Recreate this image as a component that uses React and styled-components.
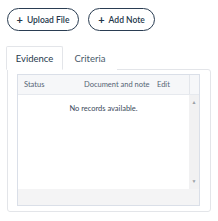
import React from "react";
import styled, { createGlobalStyle } from "styled-components";

const Global = createGlobalStyle`
  html, body { margin: 0; padding: 0; background: #fff; }
  body { font-family: "Lato", "Open Sans", sans-serif; color: #2b3a4a; }
`;

const Page = styled.div`
  width: 218px;
  padding: 8px 8px 0 6px;
  box-sizing: border-box;
`;

const Toolbar = styled.div`
  display: flex;
  gap: 9px;
  padding-left: 1px;
`;

const PillButton = styled.button`
  height: 23px;
  width: ${(p) => p.$w}px;
  padding: 0;
  border: 1px solid #2a3d52;
  border-radius: 12px;
  background: #fff;
  display: flex;
  align-items: center;
  justify-content: center;
  gap: 4px;
  font-family: "Lato", sans-serif;
  font-size: 8.5px;
  font-weight: 600;
  color: #24374a;
  box-sizing: border-box;
`;

const Plus = styled.span`
  font-size: 11px;
  font-weight: 700;
  line-height: 1;
  margin-top: -1px;
`;

const Tabs = styled.div`
  display: flex;
  margin-top: 15px;
  position: relative;
  z-index: 1;
`;

const Tab = styled.div`
  height: 24px;
  width: ${(p) => p.$w}px;
  box-sizing: border-box;
  display: flex;
  align-items: center;
  justify-content: center;
  font-size: 9.5px;
  color: ${(p) => (p.$active ? "#26394c" : "#4a5b6b")};
  border: 1px solid ${(p) => (p.$active ? "#e3e5e9" : "transparent")};
  border-bottom: 1px solid ${(p) => (p.$active ? "#fff" : "transparent")};
  border-radius: 2px 2px 0 0;
  background: #fff;
  margin-bottom: -1px;
`;

const Panel = styled.div`
  margin-left: 1px;
  width: 204px;
  height: 143px;
  box-sizing: border-box;
  border: 1px solid #e3e5e9;
  border-radius: 0 3px 3px 3px;
  padding: 4px 10px 0 9px;
`;

const Grid = styled.div`
  height: 132px;
  box-sizing: border-box;
  border: 1px solid #dadfe8;
  display: flex;
  flex-direction: column;
`;

const HeaderRow = styled.div`
  display: grid;
  grid-template-columns: 60px 73px 38px 1fr;
  height: 19px;
  background: #f6f7f9;
  border-bottom: 1px solid #e6e9ee;
  font-size: 7.5px;
  color: #556474;
  align-items: center;
`;

const HeadCell = styled.div`
  padding-left: ${(p) => p.$pl || 0}px;
  white-space: nowrap;
  height: 100%;
  display: flex;
  align-items: center;
  border-left: ${(p) => (p.$divider ? "1px solid #e3e6eb" : "none")};
`;

const Body = styled.div`
  flex: 1;
  display: flex;
`;

const Content = styled.div`
  flex: 1;
  display: flex;
  justify-content: center;
  padding-top: 9px;
  font-size: 7.5px;
  color: #3a4a5a;
`;

const Scrollbar = styled.div`
  width: 10px;
  background: #f1f1f2;
  display: flex;
  flex-direction: column;
  justify-content: space-between;
  align-items: center;
  padding: 4px 0 5px;
  box-sizing: border-box;
  font-size: 5px;
  color: #9aa0a6;
`;

const Footer = styled.div`
  height: 16px;
  background: #f4f4f5;
`;

export default function App() {
  return (
    <>
      <Global />
      <Page>
        <Toolbar>
          <PillButton $w={72}>
            <Plus>+</Plus>Upload File
          </PillButton>
          <PillButton $w={67}>
            <Plus>+</Plus>Add Note
          </PillButton>
        </Toolbar>
        <Tabs>
          <Tab $active $w={57}>Evidence</Tab>
          <Tab $w={54}>Criteria</Tab>
        </Tabs>
        <Panel>
          <Grid>
            <HeaderRow>
              <HeadCell $pl={6}>Status</HeadCell>
              <HeadCell $pl={6}>Document and note</HeadCell>
              <HeadCell $pl={6}>Edit</HeadCell>
              <HeadCell $divider />
            </HeaderRow>
            <Body>
              <Content>No records available.</Content>
              <Scrollbar>
                <span>▲</span>
                <span>▼</span>
              </Scrollbar>
            </Body>
            <Footer />
          </Grid>
        </Panel>
      </Page>
    </>
  );
}
